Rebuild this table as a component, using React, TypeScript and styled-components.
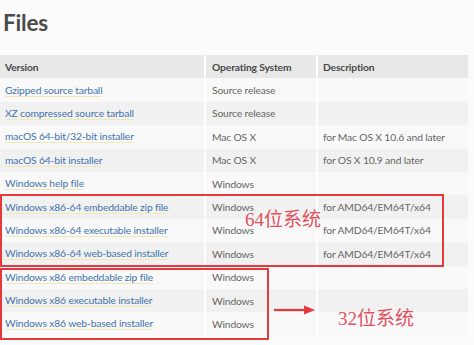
import React from "react";
import styled, { createGlobalStyle } from "styled-components";

const Global = createGlobalStyle`
  html, body { margin: 0; padding: 0; background: #fbfbfb; }
  body { font-family: Lato, "Liberation Sans", sans-serif; }
`;

const Page = styled.div`
  width: 474px;
  height: 345px;
  overflow: hidden;
  background: #fbfbfb;
`;

const Title = styled.h1`
  margin: 0;
  padding: 8px 0 0 3px;
  height: 55px;
  box-sizing: border-box;
  font-family: Lato, "Liberation Sans", sans-serif;
  font-weight: 700;
  font-size: 22.5px;
  line-height: 30px;
  color: #4b4b4b;
  letter-spacing: -0.2px;
`;

const TableWrap = styled.div`
  position: relative;
  width: 468px;
`;

const Grid = styled.div`
  display: grid;
  grid-template-columns: 204px 110px 1fr;
  grid-auto-rows: 23.4px;
  column-gap: 2px;
  background: #ffffff;
`;

const Cell = styled.div<{ $shade: "head" | "light" | "gray"; $pad: number }>`
  display: flex;
  align-items: center;
  padding-left: ${(p) => p.$pad}px;
  white-space: nowrap;
  overflow: hidden;
  font-size: 10.3px;
  letter-spacing: -0.15px;
  color: #666;
  font-weight: ${(p) => (p.$shade === "head" ? 700 : 400)};
  ${(p) => (p.$shade === "head" ? "color: #4a4a4a;" : "")}
  background: ${(p) =>
    p.$shade === "head" ? "#e8e8e8" : p.$shade === "gray" ? "#f1f1f1" : "#f9f9f9"};
`;

const FileLink = styled.a`
  color: #4274ad;
  text-decoration: none;
  border-bottom: 1px solid #f3e7b4;
  line-height: 12px;
`;

const RedBox = styled.div<{ $l: number; $t: number; $w: number; $h: number }>`
  position: absolute;
  left: ${(p) => p.$l}px;
  top: ${(p) => p.$t}px;
  width: ${(p) => p.$w}px;
  height: ${(p) => p.$h}px;
  border: 2px solid #e5393d;
  box-sizing: border-box;
  pointer-events: none;
`;

const Note = styled.span`
  font-family: "Liberation Serif", "Noto Sans CJK SC", serif;
  font-size: 19px;
  line-height: 20px;
  color: #e0505e;
  white-space: nowrap;
`;

const Note64 = styled.div`
  position: absolute;
  left: 245px;
  top: 155px;
`;

const Note32 = styled.div`
  position: absolute;
  left: 273px;
  top: 249px;
  display: flex;
  align-items: flex-start;
  gap: 21px;
`;

const Arrow = styled.svg`
  flex: none;
`;

const Note32Text = styled(Note)`
  margin-top: 5px;
`;

type Row = { v: string; os: string; d: string };

const rows: Row[] = [
  { v: "Gzipped source tarball", os: "Source release", d: "" },
  { v: "XZ compressed source tarball", os: "Source release", d: "" },
  { v: "macOS 64-bit/32-bit installer", os: "Mac OS X", d: "for Mac OS X 10.6 and later" },
  { v: "macOS 64-bit installer", os: "Mac OS X", d: "for OS X 10.9 and later" },
  { v: "Windows help file", os: "Windows", d: "" },
  { v: "Windows x86-64 embeddable zip file", os: "Windows", d: "for AMD64/EM64T/x64" },
  { v: "Windows x86-64 executable installer", os: "Windows", d: "for AMD64/EM64T/x64" },
  { v: "Windows x86-64 web-based installer", os: "Windows", d: "for AMD64/EM64T/x64" },
  { v: "Windows x86 embeddable zip file", os: "Windows", d: "" },
  { v: "Windows x86 executable installer", os: "Windows", d: "" },
  { v: "Windows x86 web-based installer", os: "Windows", d: "" },
];

export default function App() {
  return (
    <Page>
      <Global />
      <Title>Files</Title>
      <TableWrap>
        <Grid>
          <Cell $shade="head" $pad={5}>Version</Cell>
          <Cell $shade="head" $pad={6}>Operating System</Cell>
          <Cell $shade="head" $pad={5}>Description</Cell>
          {rows.map((r, i) => {
            const shade = i % 2 === 0 ? "light" : "gray";
            return (
              <React.Fragment key={r.v}>
                <Cell $shade={shade} $pad={5}>
                  <FileLink href="#">{r.v}</FileLink>
                </Cell>
                <Cell $shade={shade} $pad={6}>{r.os}</Cell>
                <Cell $shade={shade} $pad={5}>{r.d}</Cell>
              </React.Fragment>
            );
          })}
        </Grid>
        <RedBox $l={0} $t={139} $w={444} $h={73} />
        <RedBox $l={0} $t={213} $w={269} $h={72} />
        <Note64>
          <Note>64位系统</Note>
        </Note64>
        <Note32>
          <Arrow width="44" height="12" viewBox="0 0 44 12">
            <path d="M1 6 H33" stroke="#e5393d" strokeWidth="2.2" />
            <path d="M31 1.5 L42 6 L31 10.5 Z" fill="#e5393d" />
          </Arrow>
          <Note32Text>32位系统</Note32Text>
        </Note32>
      </TableWrap>
    </Page>
  );
}
